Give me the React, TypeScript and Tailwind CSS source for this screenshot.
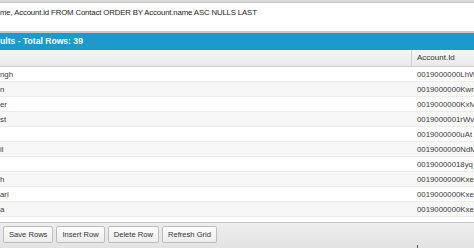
import React from 'react';

interface ResultRow {
  name: string;
  accountId: string;
}

const rows: ResultRow[] = [
  { name: 'ngh', accountId: '0019000000LhWx' },
  { name: 'n', accountId: '0019000000Kwm' },
  { name: 'er', accountId: '0019000000KxM' },
  { name: 'st', accountId: '0019000001rWv' },
  { name: '', accountId: '0019000000uAt' },
  { name: 'il', accountId: '0019000000NdM' },
  { name: '', accountId: '00190000018yq' },
  { name: 'h', accountId: '0019000000Kxe' },
  { name: 'ari', accountId: '0019000000Kxe' },
  { name: 'a', accountId: '0019000000Kxe' },
  { name: 'ro', accountId: '0019000000K4a' },
];

const buttons = ['Save Rows', 'Insert Row', 'Delete Row', 'Refresh Grid'];

const font = "font-['Liberation_Sans',Arial,sans-serif]";

const App: React.FC = () => {
  return (
    <div
      className={`w-[474px] h-[248px] overflow-hidden bg-white flex flex-col ${font} text-[7.8px] text-[#3a3a3a]`}
    >
      {/* Query box */}
      <div className="h-[3px] bg-[#dcdcdc] border-b border-[#c4c4c4]" />
      <div className="h-[30px] bg-white border-b-2 border-[#c9c9c9] whitespace-nowrap leading-none pt-[6px] text-[7.8px] tracking-[-0.15px] text-[#222]">
        me, Account.id FROM Contact ORDER BY Account.name ASC NULLS LAST
      </div>

      {/* Results title */}
      <div className="h-[17px] bg-[#1b9bcb] text-white font-bold text-[8.6px] leading-[17px] whitespace-nowrap">
        ults - Total Rows: 39
      </div>

      {/* Column header */}
      <div className="h-[17px] flex bg-gradient-to-b from-[#f7f7f7] to-[#e9e9e9] border-b border-[#cfcfcf]">
        <div className="w-[412px] border-r border-[#cfcfcf]" />
        <div className="flex-1 pl-[5px] leading-[16px] whitespace-nowrap text-[8px] text-[#333]">Account.Id</div>
      </div>

      {/* Rows */}
      <div className="h-[155px] overflow-hidden">
        {rows.map((row, i) => (
          <div
            key={i}
            className={`h-[15px] flex border-b border-[#ececec] leading-[16px] whitespace-nowrap ${
              i % 2 === 1 ? 'bg-[#f7f7f7]' : 'bg-white'
            } ${i === 10 ? 'leading-[6px]' : ''}`}
          >
            <div className="w-[412px] overflow-hidden">{row.name}</div>
            <div className="flex-1 pl-[5px] overflow-hidden">{row.accountId}</div>
          </div>
        ))}
      </div>

      {/* Toolbar */}
      <div className="flex-1 bg-gradient-to-b from-[#ededed] to-[#e3e3e3] border-t border-[#c8c8c8] flex items-start gap-[3px] pl-[3px] pt-[3px] relative">
        {buttons.map((label) => (
          <button
            key={label}
            className="h-[17px] px-[5px] border border-[#bdbdbd] rounded-[2px] bg-gradient-to-b from-[#fdfdfd] to-[#ececec] text-[7.6px] leading-none text-[#333]"
          >
            {label}
          </button>
        ))}
        <div className="absolute left-[417px] bottom-0 w-[1px] h-[3px] bg-[#555]" />
      </div>
    </div>
  );
};

export default App;
